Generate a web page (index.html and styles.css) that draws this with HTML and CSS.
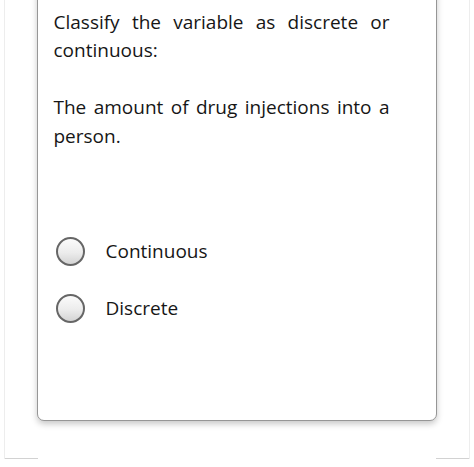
FILE: index.html
```html
<!DOCTYPE html>
<html>
<head>
<meta charset="utf-8">
<link rel="stylesheet" href="styles.css">
</head>
<body>
<div class="frame">
  <div class="card">
    <div class="question">
      <p class="para">Classify the variable as discrete or continuous:</p>
      <p class="para">The amount of drug injections into a person.</p>
    </div>
    <div class="options">
      <label class="option"><span class="radio"></span><span class="label">Continuous</span></label>
      <label class="option"><span class="radio"></span><span class="label">Discrete</span></label>
    </div>
  </div>
  <div class="foot">
    <span class="seg"></span>
    <span class="seg"></span>
  </div>
</div>
</body>
</html>
```

FILE: styles.css
```css
html, body {
  margin: 0;
  padding: 0;
  background: #ffffff;
  overflow: hidden;
}
body {
  font-family: "Open Sans", "DejaVu Sans", sans-serif;
  color: #161616;
}
.frame {
  margin-left: 4px;
  width: 464px;
  height: 459px;
  border-left: 1px solid #ededed;
  border-right: 1px solid #ededed;
  display: flex;
  flex-direction: column;
}
.card {
  margin: -20px 32px 0 32px;
  height: 441px;
  border: 1.5px solid #969696;
  border-radius: 7px;
  box-shadow: 0 3px 6px rgba(0, 0, 0, 0.22);
  padding: 26.5px 0 0 15.5px;
  box-sizing: border-box;
  background: #fff;
}
.question {
  width: 336px;
  font-size: 19px;
  line-height: 28.5px;
  text-align: justify;
}
.para {
  margin: 0 0 28.5px 0;
}
.para:last-child {
  margin-bottom: 0;
}
.options {
  margin-top: 72.5px;
  display: flex;
  flex-direction: column;
}
.option {
  height: 57px;
  display: flex;
  align-items: center;
  font-size: 19px;
}
.radio {
  width: 29px;
  height: 29px;
  box-sizing: border-box;
  border: 2px solid #666666;
  border-radius: 50%;
  background: linear-gradient(to bottom, #fbfbfb 0%, #ececec 55%, #d4d4d4 100%);
  margin-left: 2px;
  margin-right: 21px;
  flex: none;
}
.foot {
  margin-top: auto;
  display: flex;
  justify-content: space-between;
}
.seg {
  width: 33px;
  border-bottom: 1px solid #d2d2d2;
}
```
